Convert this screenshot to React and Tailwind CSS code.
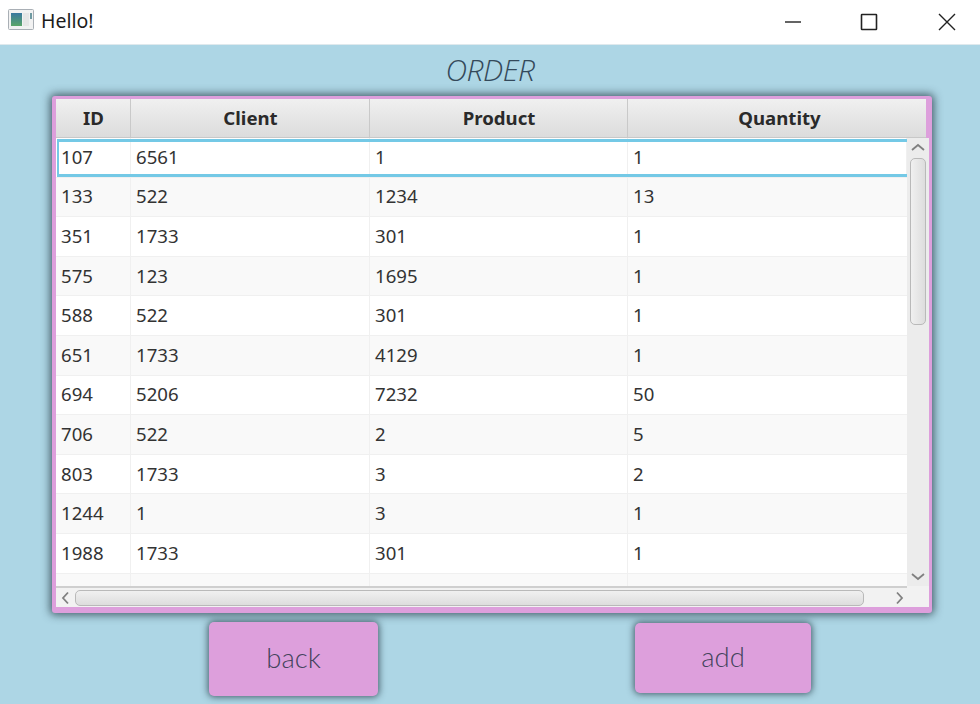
import React from "react";

const rows = [
  ["107", "6561", "1", "1"],
  ["133", "522", "1234", "13"],
  ["351", "1733", "301", "1"],
  ["575", "123", "1695", "1"],
  ["588", "522", "301", "1"],
  ["651", "1733", "4129", "1"],
  ["694", "5206", "7232", "50"],
  ["706", "522", "2", "5"],
  ["803", "1733", "3", "2"],
  ["1244", "1", "3", "1"],
  ["1988", "1733", "301", "1"],
  ["", "", "", ""],
];

const colWidths = ["w-[75px]", "w-[239px]", "w-[258px]", "flex-1"];
const headers = ["ID", "Client", "Product", "Quantity"];

const Chevron = ({ d }) => (
  <svg width="16" height="16" viewBox="0 0 16 16" fill="none" stroke="#808080" strokeWidth="1.8">
    <path d={d} />
  </svg>
);

const App = () => {
  return (
    <div className="w-[980px] h-[704px] overflow-hidden bg-[#add6e5] flex flex-col font-['Noto_Sans',sans-serif]">
      {/* Title bar */}
      <div className="h-[45px] shrink-0 bg-white border-b border-[#dfe9ed] flex items-center pl-[8px]">
        <svg width="26" height="22" viewBox="0 0 26 22" className="mb-[4px]">
          <defs>
            <linearGradient id="appIcon" x1="0" y1="0" x2="0" y2="1">
              <stop offset="0" stopColor="#3a78a0" />
              <stop offset="1" stopColor="#5aa668" />
            </linearGradient>
          </defs>
          <rect x="0.5" y="0.5" width="25" height="20" rx="1" fill="#f2f2f2" stroke="#a9afb5" />
          <rect x="3" y="4" width="11" height="13" fill="url(#appIcon)" />
          <rect x="15" y="4" width="6" height="13" fill="#e6e6e6" />
          <rect x="22" y="4" width="2" height="6" fill="#6f9aa2" />
        </svg>
        <span className="ml-[7px] mb-[3px] text-[19.5px] text-[#1c1c1c]">Hello!</span>
        <div className="ml-auto flex items-center">
          <button className="w-[62px] h-[40px] flex items-center justify-center">
            <svg width="18" height="18" viewBox="0 0 18 18" stroke="#222" strokeWidth="1.4"><path d="M1 9h16" /></svg>
          </button>
          <button className="w-[90px] h-[40px] flex items-center justify-center">
            <svg width="18" height="18" viewBox="0 0 18 18" fill="none" stroke="#222" strokeWidth="1.6"><rect x="1.5" y="1.5" width="15" height="15" rx="0.5" /></svg>
          </button>
          <button className="w-[66px] h-[40px] flex items-center justify-center">
            <svg width="18" height="18" viewBox="0 0 18 18" stroke="#222" strokeWidth="1.4"><path d="M1 1l16 16M17 1L1 17" /></svg>
          </button>
        </div>
      </div>

      {/* Heading */}
      <div className="h-[51px] shrink-0 flex items-center justify-center pb-[2px]">
        <h1 className="text-[30px] italic font-light text-[#34495a] font-['Open_Sans',sans-serif] tracking-[-0.5px]">ORDER</h1>
      </div>

      {/* Table */}
      <div className="ml-[52px] w-[880px] h-[517px] shrink-0 rounded-[3px] bg-white border-[4px] border-t-[3px] border-r-[3px] border-b-[6px] border-[#dd9fdc] shadow-[0_0_8px_2px_rgba(30,50,60,0.72)] flex flex-col overflow-hidden">
        <div className="h-[39px] shrink-0 pr-[3px] bg-[#dd9fdc]">
          <div className="h-full flex bg-gradient-to-b from-[#f0f0f0] to-[#dcdcdc] border-b border-[#c8c8c8]">
            {headers.map((h, i) => (
              <div
                key={h}
                className={`${colWidths[i]} flex items-center justify-center pl-[1px] last:pl-[5px] text-[18.6px] font-bold text-[#2a2a2a] border-r border-[#c9c9c9] last:border-r-0`}
              >
                {h}
              </div>
            ))}
          </div>
        </div>
        <div className="flex-1 min-h-0 flex">
          <div className="w-[851px] flex flex-col min-h-0">
            <div className="flex-1 min-h-0 overflow-hidden">
              {rows.map((row, r) => (
                <div
                  key={r}
                  className={`h-[39.6px] flex relative ${r % 2 === 1 ? "bg-[#f9f9f9]" : "bg-white"}`}
                >
                  {row.map((cell, c) => (
                    <div
                      key={c}
                      className={`${colWidths[c]} flex items-center pl-[5px] pb-[1px] text-[18.6px] text-[#333333] border-r border-b border-[#f0f0f0] last:border-r-0`}
                    >
                      {cell}
                    </div>
                  ))}
                  {r === 0 && <div className="absolute left-[1px] right-0 top-[1px] bottom-[1px] border-2 border-r-0 border-y-[3px] border-[#74c9e6]" />}
                </div>
              ))}
            </div>
            {/* Horizontal scrollbar */}
            <div className="h-[21px] shrink-0 bg-[#f2f2f2] border-t-2 border-[#cfcfcf] flex items-center">
              <div className="w-[19px] flex justify-center"><Chevron d="M10 2.5L5 8l5 5.5" /></div>
              <div className="w-[789px] h-[16px] rounded-[5px] border border-[#b9b9b9] bg-gradient-to-b from-[#f0f0f0] to-[#dddddd]" />
              <div className="flex-1 flex justify-end"><Chevron d="M6 2.5l5 5.5-5 5.5" /></div>
            </div>
          </div>
          {/* Vertical scrollbar */}
          <div className="w-[22px] shrink-0 bg-[#ececec] flex flex-col items-center">
            <div className="h-[20px] flex items-center justify-center"><Chevron d="M2 10l6-5 6 5" /></div>
            <div className="w-[16px] h-[167px] rounded-[5px] border border-[#b9b9b9] bg-gradient-to-r from-[#f0f0f0] to-[#dddddd]" />
            <div className="flex-1" />
            <div className="h-[20px] flex items-center justify-center"><Chevron d="M2 6l6 5 6-5" /></div>
            <div className="h-[21px] w-full bg-[#f2f2f2]" />
          </div>
        </div>
      </div>

      {/* Buttons */}
      <div className="flex items-start mt-[9px]">
        <button className="ml-[209px] w-[169px] h-[74px] pb-[3px] rounded-[5px] bg-[#dd9fdc] shadow-[0_0_7px_1px_rgba(30,50,60,0.75)] text-[27.5px] text-[#44445c] font-['Lato',sans-serif] font-light">
          back
        </button>
        <button className="ml-[257px] mt-[1px] w-[176px] h-[70px] pb-[3px] rounded-[5px] bg-[#dd9fdc] shadow-[0_0_7px_1px_rgba(30,50,60,0.75)] text-[27.5px] text-[#44445c] font-['Lato',sans-serif] font-light">
          add
        </button>
      </div>
    </div>
  );
};

export default App;
